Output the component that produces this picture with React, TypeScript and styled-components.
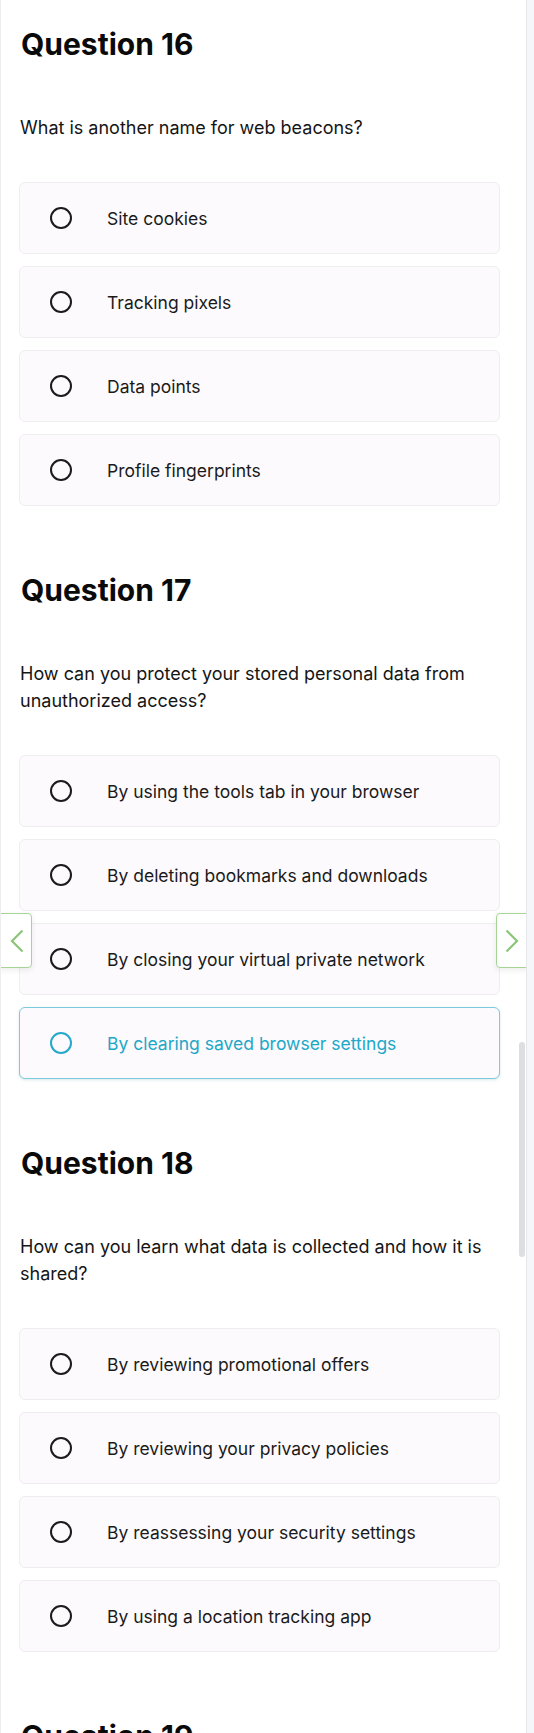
import React from 'react';
import styled, { createGlobalStyle } from 'styled-components';

interface Question {
  number: number;
  text?: string;
  options: string[];
  selected?: number;
}

const questions: Question[] = [
  {
    number: 16,
    text: 'What is another name for web beacons?',
    options: ['Site cookies', 'Tracking pixels', 'Data points', 'Profile fingerprints'],
  },
  {
    number: 17,
    text: 'How can you protect your stored personal data from unauthorized access?',
    options: [
      'By using the tools tab in your browser',
      'By deleting bookmarks and downloads',
      'By closing your virtual private network',
      'By clearing saved browser settings',
    ],
    selected: 3,
  },
  {
    number: 18,
    text: 'How can you learn what data is collected and how it is shared?',
    options: [
      'By reviewing promotional offers',
      'By reviewing your privacy policies',
      'By reassessing your security settings',
      'By using a location tracking app',
    ],
  },
  // only the heading of the next question peeks in at the bottom
  { number: 19, options: [] },
];

const App: React.FC = () => {
  return (
    <>
      <GlobalStyle />
      <Page>
        <Panel>
          {questions.map(q => (
            <Section key={q.number}>
              <Heading>Question {q.number}</Heading>
              {q.text && <Prompt>{q.text}</Prompt>}
              {q.options.length > 0 && (
                <Options>
                  {q.options.map((opt, i) => (
                    <Option key={opt} active={q.selected === i}>
                      <Radio active={q.selected === i} />
                      <OptionLabel active={q.selected === i}>{opt}</OptionLabel>
                    </Option>
                  ))}
                </Options>
              )}
            </Section>
          ))}
          <NavButton side="left" aria-label="Previous">
            <svg width="14" height="24" viewBox="0 0 14 24">
              <path d="M12.5 1.5 L2 12 L12.5 22.5" fill="none" stroke="#8cc478" strokeWidth="2.2" />
            </svg>
          </NavButton>
          <NavButton side="right" aria-label="Next">
            <svg width="14" height="24" viewBox="0 0 14 24">
              <path d="M1.5 1.5 L12 12 L1.5 22.5" fill="none" stroke="#8cc478" strokeWidth="2.2" />
            </svg>
          </NavButton>
          <ScrollThumb />
        </Panel>
      </Page>
    </>
  );
};

export default App;

const GlobalStyle = createGlobalStyle`
  html, body {
    margin: 0;
    padding: 0;
    background: #f5f6fa;
  }
  body {
    font-family: Inter, "Noto Sans", sans-serif;
    color: #111;
  }
`;

const Page = styled.div`
  height: 1733px;
  overflow: hidden;
`;

const Panel = styled.main`
  position: relative;
  box-sizing: border-box;
  width: 527px;
  height: 1733px;
  overflow: hidden;
  background: #fff;
  border-left: 1px solid #ededf0;
  border-right: 1px solid #e6e7eb;
  padding: 27px 26px 0 18px;
`;

const Section = styled.section`
  margin-bottom: 67px;
`;

const Heading = styled.h2`
  margin: 0 0 53px 2px;
  font-size: 30px;
  line-height: 34px;
  font-weight: 700;
  color: #0a0a0a;
`;

const Prompt = styled.p`
  margin: 0 0 41px 1px;
  font-size: 18px;
  line-height: 27px;
  color: #151515;
`;

const Options = styled.div`
  display: flex;
  flex-direction: column;
  gap: 12px;
`;

const Option = styled.div<{ active?: boolean }>`
  display: flex;
  align-items: center;
  box-sizing: border-box;
  height: 72px;
  padding-left: 30px;
  border-radius: 6px;
  background: #fdfafd;
  border: 1px solid ${p => (p.active ? '#7ccadb' : '#f0edf0')};
  box-shadow: ${p => (p.active ? '0 1px 3px rgba(40, 120, 140, 0.18)' : 'none')};
`;

const Radio = styled.span<{ active?: boolean }>`
  box-sizing: border-box;
  width: 22px;
  height: 22px;
  border-radius: 50%;
  border: 2px solid ${p => (p.active ? '#25a8c9' : '#1b1b1b')};
  margin-right: 35px;
  flex-shrink: 0;
`;

const OptionLabel = styled.span<{ active?: boolean }>`
  font-size: 17.5px;
  color: ${p => (p.active ? '#20a8c8' : '#1a1a1a')};
`;

const NavButton = styled.button<{ side: 'left' | 'right' }>`
  position: absolute;
  top: 913px;
  ${p => (p.side === 'left' ? 'left: -4px; padding: 0 0 0 4px;' : 'left: 495px; padding: 0 4px 0 0;')}
  width: 35px;
  height: 55px;
  box-sizing: border-box;
  display: flex;
  align-items: center;
  justify-content: center;
  background: #fff;
  border: 1.5px solid #a6d496;
  border-radius: 4px;
  box-shadow: 0 2px 6px rgba(0, 0, 0, 0.08);
  cursor: pointer;
`;

const ScrollThumb = styled.div`
  position: absolute;
  top: 1042px;
  left: 518px;
  width: 6px;
  height: 215px;
  border-radius: 3px;
  background: #dcdee2;
`;
